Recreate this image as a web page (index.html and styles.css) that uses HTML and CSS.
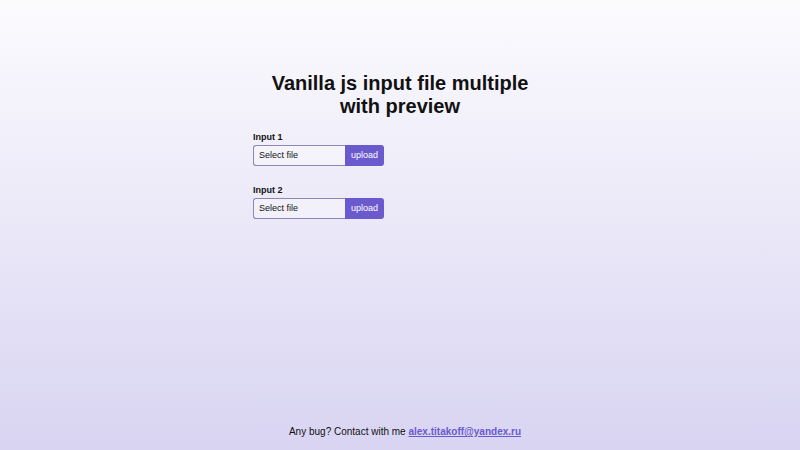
FILE: index.html
```html
<!DOCTYPE html>
<html lang="en">
<head>
<meta charset="utf-8">
<title>Vanilla js input file multiple with preview</title>
<link rel="stylesheet" href="styles.css">
</head>
<body>
<main class="main">
  <h1 class="title">Vanilla js input file multiple<br>with preview</h1>
  <div class="field">
    <div class="label">Input 1</div>
    <div class="file-group">
      <div class="file-name">Select file</div>
      <div class="file-btn">upload</div>
    </div>
  </div>
  <div class="field">
    <div class="label">Input 2</div>
    <div class="file-group">
      <div class="file-name">Select file</div>
      <div class="file-btn">upload</div>
    </div>
  </div>
</main>
<footer class="footer">Any bug? Contact with me <a class="mail" href="mailto:alex.titakoff@yandex.ru">alex.titakoff@yandex.ru</a></footer>
</body>
</html>
```

FILE: styles.css
```css
html, body {
  height: 100%;
}
body {
  margin: 0;
  display: flex;
  flex-direction: column;
  font-family: "Liberation Sans", Arial, sans-serif;
  color: #111;
  background: linear-gradient(to bottom, #fbfbfe 0%, #eeecf9 40%, #d8d4f2 100%);
}
.main {
  flex: 1;
  width: 294px;
  margin: 0 auto;
  padding-top: 72px;
}
.title {
  margin: 0 0 14px;
  font-size: 20px;
  line-height: 23px;
  font-weight: bold;
  text-align: center;
}
.field {
  margin-bottom: 19px;
}
.label {
  font-size: 9px;
  line-height: 11px;
  font-weight: bold;
  margin-bottom: 2px;
}
.file-group {
  display: flex;
  height: 21px;
}
.file-name {
  box-sizing: border-box;
  width: 92px;
  height: 21px;
  padding-left: 5px;
  border: 1px solid #8e86b4;
  border-right: none;
  border-radius: 3px 0 0 3px;
  background: rgba(255, 255, 255, 0.35);
  font-size: 9px;
  line-height: 19px;
}
.file-btn {
  box-sizing: border-box;
  width: 39px;
  height: 21px;
  background: #6a5acd;
  color: #fff;
  border-radius: 0 3px 3px 0;
  font-size: 9px;
  line-height: 21px;
  text-align: center;
}
.footer {
  text-align: center;
  font-size: 10px;
  line-height: 12px;
  padding: 0 0 12px 10px;
}
.mail {
  color: #6a5acd;
  font-weight: bold;
  text-decoration: underline;
}
```
